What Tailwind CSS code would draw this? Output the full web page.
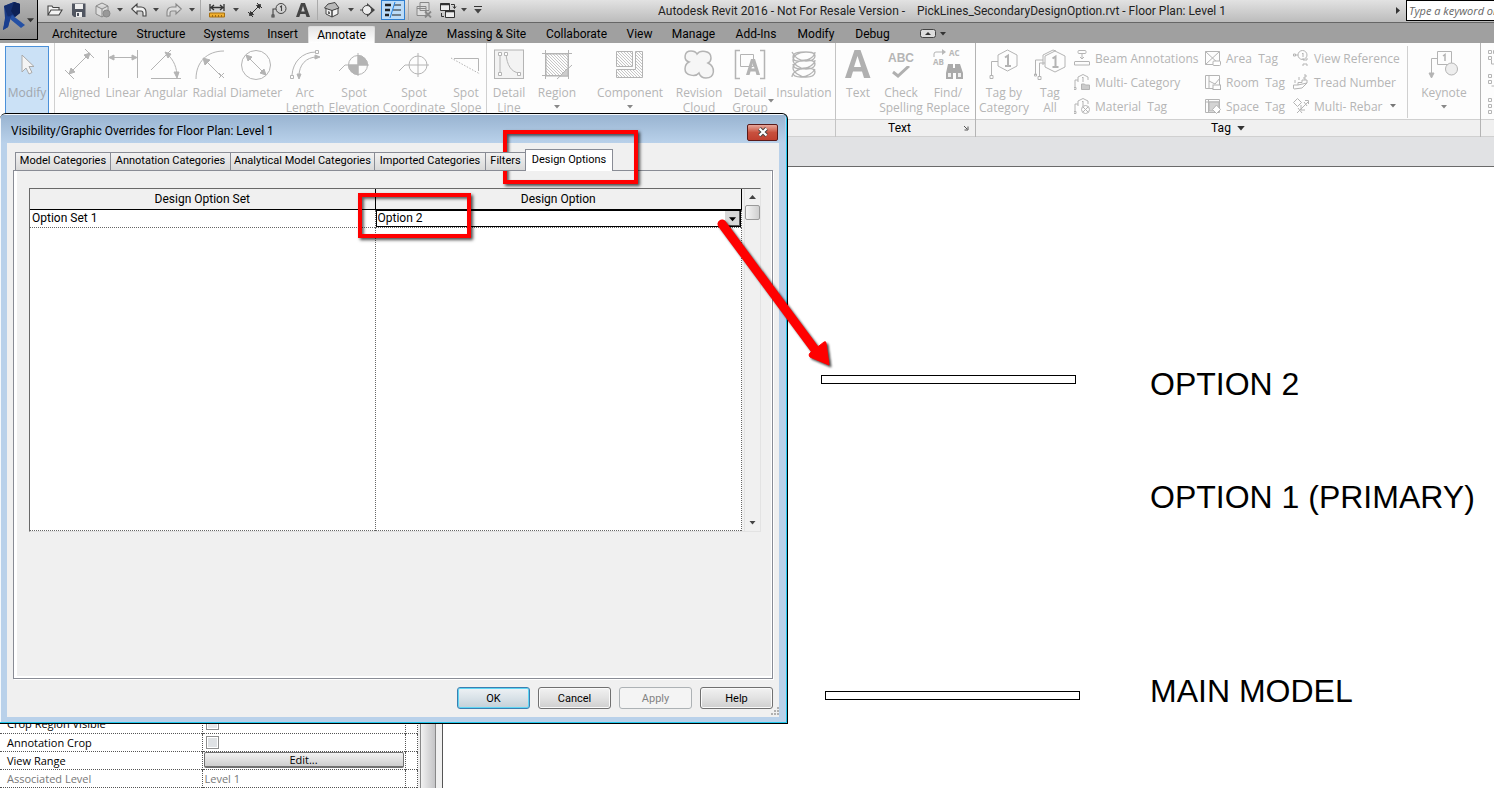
<!DOCTYPE html>
<html lang="en">
<head>
    <meta charset="UTF-8">
    <meta name="viewport" content="width=device-width, initial-scale=1.0">
    <title>Autodesk Revit 2016 - PickLines_SecondaryDesignOption.rvt</title>
    <script src="https://cdn.jsdelivr.net/npm/@tailwindcss/browser@4"></script>
</head>
<body class="h-screen overflow-hidden bg-white font-['Roboto','Open_Sans',sans-serif] text-xs text-black">

    <!-- Shared icon parts -->
    <svg class="absolute h-0 w-0">
        <symbol id="caret" viewBox="0 0 6 4"><path d="M0 0h6L3 3.6z" fill="currentColor"/></symbol>
        <pattern id="hatch" width="3" height="3" patternUnits="userSpaceOnUse"><path d="M0 0l3 3" stroke="#b8b8b8" stroke-width=".8"/></pattern>
    </svg>

    <div class="relative flex h-full flex-col">

        <!-- Title bar, quick access and ribbon tabs -->
        <header class="flex shrink-0 bg-[#a0a0a0]">
            <button aria-label="Application menu" class="flex h-10 w-[38px] shrink-0 items-center gap-0.5 border-r border-b border-black bg-linear-to-b from-[#b4b4b4] to-[#8c8c8c] pb-2 pl-[3px]">
                <svg class="h-7 w-[22px] shrink-0" viewBox="0 0 22 28">
                    <path d="M1 4l10-4 6 2v9l-5 4-5 1-2 9-5 3 2-12z" fill="#1a3b86"/>
                    <path d="M1 4l10-4 6 2-3 8-9 5z" fill="#142e6e"/>
                    <path d="M11 0l6 2v9l-5 4-4-6z" fill="#0d2156"/>
                    <path d="M9 13l13 10-4 3-11-9z" fill="#2450a4"/>
                    <path d="M3 14l5 1-3 10-5 3z" fill="#1a3f90"/>
                </svg>
                <svg class="mt-2.5 h-[5px] w-[7px] shrink-0 text-[#333]"><use href="#caret"/></svg>
            </button>

            <div class="min-w-0 flex-1">
                <div class="flex h-[23px] items-start overflow-hidden border-b border-[#666] bg-linear-to-b from-[#e2e2e2] to-[#bcbcbc]">
                    <div class="flex h-5 w-[454px] shrink-0 items-center pl-[5px] text-[#444]">
                        <button aria-label="Open" class="flex w-6 justify-center"><svg class="h-4 w-4" viewBox="0 0 16 16" fill="#f4f4f4" stroke="#444" stroke-width="1.1"><path d="M1 13V4h4l1 1.500h6V8M1 13l3-5h11l-3 5z"/></svg></button>
                        <button aria-label="Save" class="flex w-6 justify-center"><svg class="h-4 w-4" viewBox="0 0 16 16"><path d="M1 1.500h13.500V15H3l-2-2z" fill="#505560"/><path d="M4 2h8v5H4zM5 10h6v5H5z" fill="#eee"/><path d="M6 11h2v3H6z" fill="#505560"/></svg></button>
                        <button aria-label="Synchronize" class="flex w-6 justify-center"><svg class="h-4 w-4" viewBox="0 0 16 16" fill="#ddd" stroke="#888"><path d="M1 4l6-3 6 3v7l-6 4-6-3zM1 4l6 3 6-3M7 7v8"/><circle cx="11.500" cy="11.500" r="3.500" fill="#999"/></svg></button>
                        <span class="flex w-2.5 justify-center"><svg class="h-1 w-1.5"><use href="#caret"/></svg></span>
                        <button aria-label="Undo" class="flex w-[27px] justify-center"><svg class="h-4 w-4" viewBox="0 0 16 16" fill="#f0f0f0" stroke="#444" stroke-width="1.100"><path d="M.7 7l5.300-5v3h4c3 0 5 2 5 5v4h-3v-3c0-1.500-.8-2-2-2H6v3z"/></svg></button>
                        <span class="flex w-2 justify-center"><svg class="h-1 w-1.5"><use href="#caret"/></svg></span>
                        <button aria-label="Redo" class="flex w-7 justify-center"><svg class="h-4 w-4" viewBox="0 0 16 16" fill="#ddd" stroke="#888" stroke-width="1.100"><path d="M15.300 7L10 2v3H6c-3 0-5 2-5 5v4h3v-3c0-1.500.8-2 2-2h4v3z"/></svg></button>
                        <span class="flex w-2 justify-center"><svg class="h-1 w-1.5"><use href="#caret"/></svg></span>
                        <span class="mx-1 h-5 w-px bg-[#aaa]"></span>
                        <button aria-label="Measure" class="flex w-6 justify-center"><svg class="h-4 w-4" viewBox="0 0 16 16"><path d="M1 2v7M15 2v7M2 5.500h12M5 3L2 5.500 5 8M11 3l3 2.500L11 8" fill="none" stroke="#333" stroke-width="1.300"/><path d="M.5 11h15v4H.5z" fill="#f0b030" stroke="#a87010"/><path d="M3.500 13v2M6.500 13v2M9.500 13v2M12.500 13v2" stroke="#a06a10"/></svg></button>
                        <span class="flex w-2.5 justify-end"><svg class="h-1 w-1.5"><use href="#caret"/></svg></span>
                        <button aria-label="Aligned dimension" class="ml-1 flex w-6 justify-center"><svg class="h-4 w-4" viewBox="0 0 16 16" fill="none" stroke="#333"><path d="M3 13L13 3M1 10l5 5M10 1l5 5"/><path d="M2.500 13.500l1-4 3 3zM13.500 2.500l-1 4-3-3z" fill="#333"/></svg></button>
                        <button aria-label="Tag by category" class="flex w-6 justify-center"><svg class="h-4 w-4" viewBox="0 0 16 16" fill="none" stroke="#444"><circle cx="10" cy="6.500" r="5"/><path d="M5 7H2v6M1 13h2v2H1zM9 5l1.500-1v5" stroke-width="1.100"/></svg></button>
                        <button aria-label="Text" class="flex w-6 justify-center"><svg class="h-4 w-4" viewBox="0 0 16 16"><path d="M6 1h4l5 14h-3.500l-1-3H5.300l-1 3H1zM8 4L6.300 9.500h3.400z" fill="#444"/></svg></button>
                        <span class="mx-0.5 h-5 w-px bg-[#aaa]"></span>
                        <button aria-label="3D view" class="flex w-6 justify-center"><svg class="h-4 w-4" viewBox="0 0 16 16" fill="#f2f2f2" stroke="#444"><path d="M2 6v6l6 3V8zM8 8v7l6-3V6z"/><path d="M.5 6L4 2l7-1.500L15 6 8 8.500z" fill="#b8b8b8"/><path d="M4 9v3h2v-2z" fill="#666" stroke="none"/></svg></button>
                        <span class="flex w-2.5 justify-end"><svg class="h-1 w-1.5"><use href="#caret"/></svg></span>
                        <button aria-label="Section" class="flex w-[27px] justify-center"><svg class="h-4 w-4" viewBox="0 0 16 16"><path d="M7 1l8 7-8 7z" fill="#444"/><circle cx="7" cy="8" r="4.500" fill="#eee" stroke="#444"/><path d="M0 8h3" stroke="#444"/></svg></button>
                        <button aria-label="Thin lines" class="flex h-5 w-6 shrink-0 items-center justify-center border border-[#2f7fd0] bg-[#bcdcf8]"><svg class="h-4 w-4" viewBox="0 0 16 16"><path d="M0 3h6M0 8h5M0 13h4" stroke="#222" stroke-width="2.500"/><path d="M9 3h7M8 8h8M7 13h9" stroke="#222"/><path d="M10 0L5 16" stroke="#2080e0"/></svg></button>
                        <span class="mx-[3px] h-5 w-px bg-[#aaa]"></span>
                        <button aria-label="Close hidden windows" class="flex w-6 justify-center"><svg class="h-4 w-4" viewBox="0 0 16 16" fill="#ddd" stroke="#888"><path d="M4 .5h9v8H4zM1 4.500h9v9H1zM1 6.500h9"/><path d="M9 9.500l6 6M15 9.500l-6 6" stroke-width="1.800"/></svg></button>
                        <button aria-label="Switch windows" class="flex w-6 justify-center"><svg class="h-[18px] w-[18px]" viewBox="0 0 18 18" fill="#eee" stroke="#333"><path d="M1.500 2.500h9v7h-9zM6.500 9.500h9v7h-9z"/><path d="M1 3.500h10M6 10.500h10" stroke-width="1.500"/><path d="M12 3.500h3.500V7M2.500 12v3.500H5M14 5.500l1.500 2 1.500-2" fill="none"/></svg></button>
                        <span class="flex w-2 justify-center"><svg class="h-1 w-1.5"><use href="#caret"/></svg></span>
                        <span class="ml-1 flex w-3 shrink-0 flex-col items-center gap-0.5"><span class="h-px w-2 bg-[#333]"></span><svg class="h-[5px] w-2"><use href="#caret"/></svg></span>
                    </div>
                    <div class="flex h-[22px] min-w-0 flex-1 items-center pl-[166px] whitespace-pre text-[#222]">Autodesk Revit 2016 - Not For Resale Version -    PickLines_SecondaryDesignOption.rvt - Floor Plan: Level 1</div>
                    <div class="flex shrink-0 items-start gap-1.5">
                        <svg class="mt-[7px] h-[7px] w-1" viewBox="0 0 4 7"><path d="M0 0l4 3.500L0 7z" fill="#333"/></svg>
                        <input aria-label="Search" placeholder="Type a keyword or phrase" class="h-[21px] w-[88px] border border-r-0 border-black bg-white pl-0.5 font-['Open_Sans'] text-[11px] italic placeholder:text-[#666]">
                    </div>
                </div>
                <nav class="flex h-5 items-end pl-1">
                    <a href="#" class="w-[85px] text-center leading-[18px]">Architecture</a>
                    <a href="#" class="w-[68px] text-center leading-[18px]">Structure</a>
                    <a href="#" class="w-[63px] text-center leading-[18px]">Systems</a>
                    <a href="#" class="w-[49px] text-center leading-[18px]">Insert</a>
                    <a href="#" class="mx-px w-[67px] rounded-t-xs border-x border-t border-[#ddd] bg-linear-to-b from-[#e4e4e4] to-white text-center leading-4">Annotate</a>
                    <a href="#" class="w-[61px] text-center leading-[18px]">Analyze</a>
                    <a href="#" class="w-[99px] text-center leading-[18px]">Massing &amp; Site</a>
                    <a href="#" class="w-[81px] text-center leading-[18px]">Collaborate</a>
                    <a href="#" class="w-[45px] text-center leading-[18px]">View</a>
                    <a href="#" class="w-[63px] text-center leading-[18px]">Manage</a>
                    <a href="#" class="w-[62px] text-center leading-[18px]">Add-Ins</a>
                    <a href="#" class="w-[58px] text-center leading-[18px]">Modify</a>
                    <a href="#" class="w-[55px] text-center leading-[18px]">Debug</a>
                    <button aria-label="Minimize ribbon" class="ml-5 flex h-[19px] items-center gap-1">
                        <svg class="h-[9px] w-4" viewBox="0 0 16 9"><rect x=".5" y=".5" width="15" height="8" rx="2" fill="#ddd" stroke="#444"/><path d="M5 6h6L8 3z" fill="#333"/></svg>
                        <svg class="h-1 w-1.5 text-[#333]"><use href="#caret"/></svg>
                    </button>
                </nav>
            </div>
        </header>

        <!-- Ribbon panels -->
        <div class="flex h-[94px] shrink-0 overflow-hidden bg-[#fdfdfd] font-['Open_Sans',sans-serif] leading-[15px] whitespace-nowrap text-[#b5b5b5]">
            <section class="flex w-[55px] shrink-0 border-r border-[#d0d0d0] pt-[3px] pl-[5px]">
                <button class="flex w-11 flex-col items-center border border-[#4a90d9] bg-[#cbe1f6] pt-1">
                    <svg class="h-[34px] w-8" viewBox="0 0 32 34"><path d="M11 4v17l4-4 3 6 3-1.500-3-6h5z" fill="#f4f4f4" stroke="#aaa"/></svg>
                    <span class="text-[#a0a6ad]">Modify</span>
                </button>
            </section>

            <section class="flex w-[432px] shrink-0 items-start border-r border-[#d0d0d0] pt-[5px] pl-0.5">
                <button class="flex w-[45px] flex-col items-center gap-[5px]"><svg class="h-8 w-8" viewBox="0 0 32 32" fill="none" stroke="#b4b4b4"><path d="M6 25L25 6M1 22l9 9M21 1l9 9"/><path d="M5 26l2-6 4 4zM26 5l-2 6-4-4z" fill="#b4b4b4"/></svg><span>Aligned</span></button>
                <button class="flex w-[42px] flex-col items-center gap-[5px]"><svg class="h-8 w-8" viewBox="0 0 32 32" fill="none" stroke="#b4b4b4"><path d="M1.500 2v28M30.500 2v28M3 9.500h26"/><path d="M2 9.500l5-2.500v5zM30 9.500L25 7v5z" fill="#b4b4b4"/></svg><span>Linear</span></button>
                <button class="flex w-11 flex-col items-center gap-[5px]"><svg class="h-8 w-8" viewBox="0 0 32 32" fill="none" stroke="#b4b4b4"><path d="M1 30.500h30M1 22L21 2M17 6c7 6 10 14 10 23"/><path d="M15 4l6 2-3 4zM27 30l-3-6h5z" fill="#b4b4b4"/></svg><span>Angular</span></button>
                <button class="flex w-[43px] flex-col items-center gap-[5px]"><svg class="h-8 w-8" viewBox="0 0 32 32" fill="none" stroke="#b4b4b4"><path d="M2 31C2 14 13 3 30 3M10 11l17 17M25 30l5-5M25 25l5 5"/><path d="M9 10l7 2-5 5z" fill="#b4b4b4"/></svg><span>Radial</span></button>
                <button class="flex w-[50px] flex-col items-center gap-[5px]"><svg class="h-8 w-8" viewBox="0 0 32 32" fill="none" stroke="#b4b4b4"><circle cx="16" cy="17" r="14.500"/><path d="M6 7l20 20"/><path d="M6 7l6 2-4 4zM26 27l-6-2 4-4z" fill="#b4b4b4"/></svg><span>Diameter</span></button>
                <button class="flex w-12 flex-col items-center gap-[5px]"><svg class="h-8 w-8" viewBox="0 0 32 32" fill="none" stroke="#b4b4b4"><path d="M3 27C4 14 13 4 27 4M10 28c0-11 7-19 18-19"/><path d="M1.500 27.500h3v3h-3zM26.500 2.500h3v3h-3z"/><path d="M10 31l-2-5h4zM31 9l-5-2v4z" fill="#b4b4b4"/></svg><span class="text-center">Arc<br>Length</span></button>
                <button class="flex w-[50px] flex-col items-center gap-[5px]"><svg class="h-8 w-8" viewBox="0 0 32 32" fill="none" stroke="#b4b4b4"><circle cx="20" cy="17" r="9.500"/><path d="M20 5v23M1 23l6-6h24"/><path d="M20 7.500a9.500 9.500 0 0 1 9.500 9.500H20zM20 26.500a9.500 9.500 0 0 1-9.500-9.500H20z" fill="#b4b4b4"/></svg><span class="text-center">Spot<br>Elevation</span></button>
                <button class="flex w-[70px] flex-col items-center gap-[5px]"><svg class="h-8 w-8" viewBox="0 0 32 32" fill="none" stroke="#b4b4b4"><circle cx="20" cy="17" r="9"/><path d="M20 5v24M1 23l6-6h24"/></svg><span class="text-center">Spot<br>Coordinate</span></button>
                <button class="flex w-[34px] flex-col items-center gap-[5px]"><svg class="h-8 w-8" viewBox="0 0 32 32" fill="none" stroke="#b4b4b4"><path d="M4 10.500h24.500V23"/><path d="M1 10l29 16" stroke-dasharray="1.500 1.500"/></svg><span class="text-center">Spot<br>Slope</span></button>
            </section>

            <section class="flex w-[349px] shrink-0 flex-col border-r border-[#c4c4c4]">
                <div class="flex h-[76px] items-start pt-[5px] pl-px">
                    <button class="flex w-[42px] flex-col items-center gap-[5px]"><svg class="h-8 w-8" viewBox="0 0 32 32" fill="none" stroke="#b4b4b4"><rect x="1.500" y="2" width="29" height="28.500" fill="#f3f3f3"/><path d="M7 7v18M13 6c1 11 5 18 13 19"/><path d="M5.500 4.500h3v3h-3zM5.500 24.500h3v3h-3zM11.500 4.500h3v3h-3zM24.500 24.500h3v3h-3z" fill="#fff"/></svg><span class="text-center">Detail<br>Line</span></button>
                    <button class="flex w-[54px] flex-col items-center gap-[5px]"><svg class="h-8 w-8" viewBox="0 0 32 32" fill="none" stroke="#b4b4b4"><path d="M5 6h22v22H5z" fill="url(#hatch)"/><path d="M1 5.500h30M1 27.500h22M4.500 2v29M27.500 2v29M16 31l15-14"/><path d="M27 20v8h-8z" fill="#ccc"/></svg><span>Region</span><svg class="h-1 w-1.5 text-[#888]"><use href="#caret"/></svg></button>
                    <button class="flex w-[92px] flex-col items-center gap-[5px]"><svg class="h-8 w-8" viewBox="0 0 32 32" fill="url(#hatch)" stroke="#b4b4b4"><path d="M2.500 3.500h16v15h-16zM21.500 3.500h7v26h-26v-8h19z"/></svg><span>Component</span><svg class="h-1 w-1.5 text-[#888]"><use href="#caret"/></svg></button>
                    <button class="flex w-[46px] flex-col items-center gap-[5px]"><svg class="h-8 w-8" viewBox="0 0 32 32" fill="#f6f6f6" stroke="#b4b4b4" stroke-width="1.500"><path d="M6 14C0 12 1 3 8 3c3 0 5 1 6 3 3-4 14-4 14 4 0 3-1 4-3 5 8 4 7 15-2 15-4 0-6-2-7-5-3 4-14 3-14-4 0-4 2-6 4-7z"/></svg><span class="text-center">Revision<br>Cloud</span></button>
                    <button class="relative flex w-14 flex-col items-center gap-[5px]"><svg class="h-8 w-8" viewBox="0 0 32 32" fill="none" stroke="#b4b4b4"><path d="M6 2.500H1.500v28H6M26 2.500h4.500v28H26" stroke-width="1.500"/><path d="M6.500 6.500h13v12h-13z"/><path d="M17 11h4l5 16h-3.500l-1-3.500h-5l-1 3.500H12zM19 15l-1.500 5.500h3z" fill="#b4b4b4" fill-rule="evenodd" stroke="none"/></svg><span class="text-center">Detail<br>Group</span><svg class="absolute right-1 bottom-3 h-1 w-1.5 text-[#888]"><use href="#caret"/></svg></button>
                    <button class="flex w-[52px] flex-col items-center gap-[5px]"><svg class="h-8 w-8" viewBox="0 0 32 32" fill="none" stroke="#b4b4b4" stroke-width="1.300"><path d="M4 4c2 4 6 9 14 9 4 0 9-1 9-5s-6-4-9-4C10 4 5 8 5 12s7 9 13 9c4 0 9-1 9-5s-5-4-9-4C10 12 5 16 5 20s7 9 13 9c4 0 9-1 9-5s-5-4-9-4c-8 0-14 5-14 9M18 4c-6 0-13 0-13 5s5 4 8 4c8 0 14-5 14-9M5 16c0 5 5 5 8 5 7 0 14-5 14-9M5 25c0 4 5 4 8 4 6 0 12-4 14-8"/></svg><span>Insulation</span></button>
                </div>
                <div class="h-[18px] border-y border-[#d0d0d0] bg-[#f0f0f0]"></div>
            </section>

            <section class="flex w-[140px] shrink-0 flex-col border-r border-[#b4b4b4]">
                <div class="flex h-[76px] items-start pt-[5px]">
                    <button class="flex w-11 flex-col items-center gap-[5px]"><svg class="h-8 w-8" viewBox="0 0 32 32"><path d="M12.500 2h6l10 28h-6.500l-2-6.500h-9l-2 6.500H3zM15.500 8L12 19h7z" fill="#b0b0b0" fill-rule="evenodd"/></svg><span>Text</span></button>
                    <button class="flex w-[42px] flex-col items-center gap-[5px]"><span class="flex h-8 flex-col items-center pt-0.5 font-['Liberation_Sans',sans-serif] text-[12px] leading-4 font-bold">ABC<svg class="h-3 w-[18px]" viewBox="0 0 18 12"><path d="M1 6l5 4L17 0" fill="none" stroke="#b0b0b0" stroke-width="3"/></svg></span><span class="text-center">Check<br>Spelling</span></button>
                    <button class="flex w-[52px] flex-col items-center gap-[5px]"><svg class="h-8 w-8" viewBox="0 0 32 32" fill="#b8b8b8"><path d="M2 9V6q0-2 2-2h7" fill="none" stroke="#b4b4b4"/><path d="M10 1l4 3-4 3z"/><text x="17" y="8" font-size="8" font-weight="bold">AC</text><text x="1" y="17" font-size="8" font-weight="bold">AB</text><path d="M16 16h5v4h2v-4h5l3 9v6h-7v-6h-3v6h-7v-6z" fill="#aaa"/><path d="M16 25h3v4h-3zM26 25h3v4h-3z" fill="#eee"/></svg><span class="text-center">Find/<br>Replace</span></button>
                </div>
                <div class="flex h-[18px] items-center border-y border-[#d0d0d0] bg-[#f0f0f0] pr-1.5 font-['Roboto','Open_Sans',sans-serif] text-black">
                    <span class="flex-1 text-center">Text</span>
                    <svg class="h-1.5 w-1.5" viewBox="0 0 6 6"><path d="M1 1l3 3M5 1.500V5H1.500" fill="none" stroke="#555"/></svg>
                </div>
            </section>

            <section class="flex w-[505px] shrink-0 flex-col border-r border-[#b4b4b4]">
                <div class="flex h-[76px] items-start pl-1">
                    <div class="flex shrink-0 pt-[5px]">
                        <button class="flex w-12 flex-col items-center gap-[5px]"><svg class="h-8 w-8" viewBox="0 0 32 32" fill="none" stroke="#b4b4b4"><path d="M19.500 2l9.500 5v11l-9.500 5-9.500-5V7zM10 13.500H3.500V28"/><path d="M2 27.500h3v3H2z"/><path d="M17 9.500l3-2V18M17 18h6" stroke-width="2"/></svg><span class="text-center">Tag by<br>Category</span></button>
                        <button class="flex w-11 flex-col items-center gap-[5px]"><svg class="h-8 w-8" viewBox="0 0 32 32" fill="none" stroke="#b4b4b4"><path d="M21 3l10 5v11l-10 5-10-5V8zM9 17V7l10-5 3 1M11 15H5.500v13M9 12H1.500v15"/><path d="M4 28.500h3v3H4zM.5 26h2v2h-2z"/><path d="M18.500 10.500l3-2V19M18.500 19h6" stroke-width="2"/></svg><span class="text-center">Tag<br>All</span></button>
                    </div>
                    <div class="flex w-[131px] shrink-0 flex-col pt-[3px] pl-0.5">
                        <button class="flex h-6 items-center gap-[5px]"><svg class="h-4 w-4 shrink-0" viewBox="0 0 16 16" fill="none" stroke="#b4b4b4"><rect x="4" y=".5" width="8" height="3" rx="1"/><path d="M8 3.500V9M6 7l2 2 2-2M.5 11.500h15M.5 15h15M.5 12v3M15.500 12v3"/></svg><span>Beam Annotations</span></button>
                        <button class="flex h-6 items-center gap-[5px]"><svg class="h-4 w-4 shrink-0" viewBox="0 0 16 16" fill="none" stroke="#b4b4b4"><path d="M9 .5l5 2.500v3M4 8V3L9 .5M4 6H1v7M0 13.500h2v2H0zM8 4l1-1v5"/><path d="M7.500 10h3l1 1h4v4.500h-8z" fill="#ccc"/></svg><span>Multi- Category</span></button>
                        <button class="flex h-6 items-center gap-[5px]"><svg class="h-4 w-4 shrink-0" viewBox="0 0 16 16" fill="none" stroke="#b4b4b4"><path d="M9 .5l5 2.500v3M4 8V3L9 .5M4 6H1v7M0 13.500h2v2H0zM8 4l1-1v5"/><circle cx="11.500" cy="11.500" r="4"/><path d="M9 9l5 5M14 9l-5 5"/></svg><span class="whitespace-pre">Material  Tag</span></button>
                    </div>
                    <div class="flex w-[88px] shrink-0 flex-col pt-[3px] pl-0.5">
                        <button class="flex h-6 items-center gap-[5px]"><svg class="h-4 w-4 shrink-0" viewBox="0 0 16 16" fill="none" stroke="#b4b4b4"><path d="M.5 1.500h14v13H.5zM.5 1.500l14 13M14.500 1.500l-14 13"/><rect x="8" y="11" width="7.500" height="4.500" rx="1" fill="#fff"/></svg><span class="whitespace-pre">Area  Tag</span></button>
                        <button class="flex h-6 items-center gap-[5px]"><svg class="h-4 w-4 shrink-0" viewBox="0 0 16 16" fill="none" stroke="#b4b4b4"><path d="M.5 1.500h14v13H.5zM4 1v13M4 7l6 3 5-6"/><rect x="8" y="11" width="7.500" height="4.500" fill="#fff"/></svg><span class="whitespace-pre">Room  Tag</span></button>
                        <button class="flex h-6 items-center gap-[5px]"><svg class="h-4 w-4 shrink-0" viewBox="0 0 16 16" fill="none" stroke="#b4b4b4"><path d="M.5 1.500h14v13H.5zM3.500 1v13M1 4h14"/><path d="M4 4h10v9H4z" fill="#d4d4d4"/><path d="M11.500 7l4 4.500-4 4-4-4z" fill="#fff"/></svg><span class="whitespace-pre">Space  Tag</span></button>
                    </div>
                    <div class="flex w-[116px] shrink-0 flex-col pt-[3px] pl-0.5">
                        <button class="flex h-6 items-center gap-[5px]"><svg class="h-4 w-4 shrink-0" viewBox="0 0 16 16" fill="none" stroke="#b4b4b4"><circle cx="9.500" cy="5" r="4.500"/><path d="M5 5H2M.5 4h2v2h-2zM9 4l1-1v4M9 9h2v2M15 9h-2v2M9 15h2v-2M15 15h-2v-2"/></svg><span>View Reference</span></button>
                        <button class="flex h-6 items-center gap-[5px]"><svg class="h-4 w-4 shrink-0" viewBox="0 0 16 16" fill="none" stroke="#b4b4b4"><path d="M.5 14.500V11H5V8.500h4V6h5v3l-5 5-8 1zM2 6v3M6 3v3M11 1h2v2h-2v2h2M5 11l9-2"/></svg><span>Tread Number</span></button>
                        <button class="flex h-6 items-center gap-[5px]"><svg class="h-4 w-4 shrink-0" viewBox="0 0 16 16" fill="none" stroke="#b4b4b4"><path d="M4.500.5l4 4-4 4-4-4zM4 15L15 4M8 7v5h4M5 10l4 5M11 4l3 4M12 2.500h3.500V6"/></svg><span>Multi- Rebar</span><svg class="ml-0.5 h-1 w-1.5 text-[#777]"><use href="#caret"/></svg></button>
                    </div>
                    <div class="mt-[3px] flex h-[72px] min-w-0 flex-1 items-start justify-center border-l border-[#d0d0d0] pt-0.5">
                        <button class="flex flex-col items-center gap-[5px]"><svg class="h-8 w-8" viewBox="0 0 32 32" fill="none" stroke="#b4b4b4"><path d="M9.500 3.500h14v13h-14zM9.500 10.500H3.500V28"/><path d="M3.500 30L1 25h5z" fill="#b4b4b4"/><path d="M15 8l2-1.500V13" stroke-width="1.500"/><circle cx="23.500" cy="21" r="6" fill="#eee"/></svg><span>Keynote</span><svg class="h-1 w-1.5 text-[#888]"><use href="#caret"/></svg></button>
                    </div>
                </div>
                <div class="flex h-[18px] items-center justify-center gap-1.5 border-y border-[#d0d0d0] bg-[#f0f0f0] font-['Roboto','Open_Sans',sans-serif] text-black">Tag<svg class="h-[5px] w-2 text-[#333]"><use href="#caret"/></svg></div>
            </section>

            <section class="flex min-w-0 flex-1 flex-col">
                <div class="flex h-[76px] flex-col gap-2 pt-[7px] pl-[7px]">
                    <svg class="h-4 w-4 shrink-0" viewBox="0 0 16 16" fill="none" stroke="#b4b4b4"><path d="M.5.5h3v3h-3zM.5 6.500h3v3h-3zM5.500.5h3v3h-3zM3.500 10v4h5"/></svg>
                    <svg class="h-4 w-4 shrink-0" viewBox="0 0 16 16" fill="none" stroke="#b4b4b4"><path d="M.5.5h3v3h-3zM.5 6.500h3v3h-3zM6.500 1.500h3v3h-3zM3.500 12h5"/></svg>
                    <svg class="h-4 w-4 shrink-0" viewBox="0 0 16 16" fill="none" stroke="#b4b4b4"><path d="M.5.5h3v3h-3zM.5 6.500h3v3h-3zM.5 12.500h3v3h-3z"/></svg>
                </div>
                <div class="h-[18px] border-y border-[#d0d0d0] bg-[#f0f0f0]"></div>
            </section>
        </div>

        <!-- Options bar -->
        <div class="h-[30px] shrink-0 border-b border-[#6a6a6a] bg-[#e1e2e4]"></div>

        <!-- Drawing area with the properties palette at its lower left -->
        <main class="relative flex min-h-0 flex-1 items-end">
            <div class="flex h-[73px] w-[443px] shrink-0 border-r border-[#555] bg-[#f0f0f0] font-['Open_Sans',sans-serif] text-[11px] leading-[17px]">
                <table class="w-[417px] table-fixed border-collapse bg-white">
                    <colgroup><col class="w-[202px]"><col class="w-[203px]"><col class="w-3"></colgroup>
                    <tbody>
                        <tr class="h-[18px] border-b border-dotted border-[#555]">
                            <td class="pl-[7px]"><label for="crop">Crop Region Visible</label></td>
                            <td class="border-x border-dotted border-[#555] pl-[3px]"><input id="crop" type="checkbox" class="block h-[13px] w-[13px] appearance-none border border-[#8e8f8f] bg-[#e6e8ea] shadow-[inset_0_0_0_1px_#fff]"></td>
                            <td class="border-r border-dotted border-[#555]"></td>
                        </tr>
                        <tr class="h-[18px] border-b border-dotted border-[#555]">
                            <td class="pl-[7px]"><label for="anno">Annotation Crop</label></td>
                            <td class="border-x border-dotted border-[#555] pl-[3px]"><input id="anno" type="checkbox" class="block h-[13px] w-[13px] appearance-none border border-[#8e8f8f] bg-[#dfe2e5] shadow-[inset_0_0_0_1px_#fff]"></td>
                            <td class="border-r border-dotted border-[#555]"></td>
                        </tr>
                        <tr class="h-[18px] border-b border-dotted border-[#555]">
                            <td class="pl-[7px]">View Range</td>
                            <td class="border-x border-dotted border-[#555] px-px"><button class="block h-4 w-full rounded-xs border border-b-2 border-[#707070] bg-linear-to-b from-[#f2f2f2] to-[#cfcfcf] leading-3">Edit...</button></td>
                            <td class="border-r border-dotted border-[#555]"></td>
                        </tr>
                        <tr class="h-[18px] border-b border-dotted border-[#555] text-[#777]">
                            <td class="pl-[7px]">Associated Level</td>
                            <td class="border-x border-dotted border-[#555] pl-0.5">Level 1</td>
                            <td class="border-r border-dotted border-[#555]"></td>
                        </tr>
                    </tbody>
                </table>
                <div class="ml-0.5 w-4 border-x border-[#888] bg-linear-to-r from-[#f2f2f2] to-[#c4c4c6]"></div>
            </div>

            <!-- Model geometry and text notes on the canvas -->
            <div class="absolute top-[208px] left-[821px] h-[9px] w-[255px] border border-black"></div>
            <div class="absolute top-[524px] left-[825px] h-[9px] w-[255px] border border-black"></div>
            <p class="absolute top-[197px] left-[1150px] font-['Liberation_Sans',sans-serif] text-[32px] leading-10 whitespace-nowrap">OPTION 2</p>
            <p class="absolute top-[310px] left-[1150px] font-['Liberation_Sans',sans-serif] text-[32px] leading-10 whitespace-nowrap">OPTION 1 (PRIMARY)</p>
            <p class="absolute top-[504px] left-[1150px] font-['Liberation_Sans',sans-serif] text-[32px] leading-10 whitespace-nowrap">MAIN MODEL</p>
        </main>

        <!-- Visibility/Graphic Overrides dialog -->
        <div role="dialog" aria-labelledby="dialog-title" class="absolute top-[113px] left-0 flex h-[611px] w-[788px] flex-col overflow-hidden rounded-t-md border border-l-0 border-black bg-[#b9d1ea] pr-2 pb-1.5 pl-[7px] shadow-[inset_-1px_-1px_0_#22c8ee,inset_1px_1px_0_#f4f8fc]">
            <div class="-mx-[6px] mt-px flex h-7 shrink-0 items-center justify-between bg-linear-to-b from-[#99b4d1] to-[#b9d1ea] pr-[7px] pl-2.5">
                <h1 id="dialog-title" class="pt-1 text-[12px]">Visibility/Graphic Overrides for Floor Plan: Level 1</h1>
                <button aria-label="Close" class="mt-1.5 flex h-[17px] w-[31px] items-center justify-center rounded-xs border border-[#5a1a1a] bg-linear-to-b from-[#e6a79c] via-[#c8503e] via-50% to-[#c04030]">
                    <svg class="h-2.5 w-3" viewBox="0 0 12 10"><path d="M2.500 1.500l7 7M9.500 1.500l-7 7" stroke="#444" stroke-width="4"/><path d="M2.500 1.500l7 7M9.500 1.500l-7 7" stroke="#fff" stroke-width="2.200"/></svg>
                </button>
            </div>

            <div class="flex min-h-0 flex-1 flex-col bg-[#f0f0f0] px-1.5 pt-1.5 pb-2">
                <div role="tablist" class="relative z-10 -mb-px flex h-[22px] items-end pl-0.5 text-[11px]">
                    <button role="tab" class="h-[19px] w-24 border border-[#898c95] bg-linear-to-b from-[#f2f2f2] to-[#d8d8d8]">Model Categories</button>
                    <button role="tab" class="-ml-px h-[19px] w-[121px] border border-[#898c95] bg-linear-to-b from-[#f2f2f2] to-[#d8d8d8]">Annotation Categories</button>
                    <button role="tab" class="-ml-px h-[19px] w-[145px] border border-[#898c95] bg-linear-to-b from-[#f2f2f2] to-[#d8d8d8]">Analytical Model Categories</button>
                    <button role="tab" class="-ml-px h-[19px] w-[112px] border border-[#898c95] bg-linear-to-b from-[#f2f2f2] to-[#d8d8d8]">Imported Categories</button>
                    <button role="tab" class="-ml-px h-[19px] w-[41px] border border-[#898c95] bg-linear-to-b from-[#f2f2f2] to-[#d8d8d8]">Filters</button>
                    <button role="tab" aria-selected="true" class="-ml-px h-[22px] w-[88px] border border-b-0 border-[#898c95] bg-white">Design Options</button>
                </div>

                <div role="tabpanel" class="min-h-0 flex-1 border border-[#898c95] pt-[17px] pr-[11px] pl-[15px] shadow-[inset_3px_0_0_#fff,inset_-1px_-2px_0_#fff,1px_1px_0_#fff]">
                    <div class="flex h-[344px] border border-t-[#696969] border-r-[#e3e3e3] border-b-[#e3e3e3] border-l-[#696969]">
                        <div class="min-w-0 flex-1 bg-white">
                            <table class="h-full w-full table-fixed border-collapse">
                                <colgroup><col class="w-[345px]"><col></colgroup>
                                <thead>
                                    <tr class="h-5 border-b border-black bg-[#f0f0f0]">
                                        <th class="border-r border-black font-normal">Design Option Set</th>
                                        <th class="border-r border-black font-normal">Design Option</th>
                                    </tr>
                                </thead>
                                <tbody>
                                    <tr class="h-[18px] border-b border-dotted border-[#666]">
                                        <td class="border-r border-dotted border-[#666] pl-0.5">Option Set 1</td>
                                        <td class="border-r border-dotted border-[#666] p-0">
                                            <div class="relative h-[17px] border border-black">
                                                <select aria-label="Design Option" class="block h-[15px] w-full appearance-none bg-white pl-px leading-[15px]">
                                                    <option>Option 2</option>
                                                </select>
                                                <span class="pointer-events-none absolute top-0 right-0 flex h-[15px] w-[15px] items-center justify-center border-r border-b border-[#555] bg-[#d8d8d8] pt-1"><svg class="h-[5px] w-[7px]"><use href="#caret"/></svg></span>
                                            </div>
                                        </td>
                                    </tr>
                                    <tr class="border-b border-dotted border-[#666]">
                                        <td class="border-r border-dotted border-[#666]"></td>
                                        <td class="border-r border-dotted border-[#666]"></td>
                                    </tr>
                                </tbody>
                            </table>
                        </div>
                        <div class="ml-0.5 flex w-4 flex-col items-center border-l border-[#e3e3e3] bg-[#f0f0f0] py-1.5">
                            <svg class="h-1 w-[7px]" viewBox="0 0 7 4"><path d="M0 4h7L3.500 0z" fill="#444"/></svg>
                            <div class="mt-1.5 h-[15px] w-[15px] rounded-xs border border-[#999] bg-linear-to-r from-[#f5f5f5] to-[#cfcfcf]"></div>
                            <svg class="mt-auto h-1 w-[7px] text-[#444]"><use href="#caret"/></svg>
                        </div>
                    </div>
                </div>

                <div class="mt-2 flex h-[22px] shrink-0 justify-end gap-2 text-[11px]">
                    <button class="w-[73px] rounded-[3px] border border-[#3c7fb1] bg-linear-to-b from-[#eef2f5] via-[#d9e2e8] via-50% to-[#c3d0d8] pt-0.5 shadow-[inset_0_0_0_1px_#5fd6f4]">OK</button>
                    <button class="w-[73px] rounded-[3px] border border-[#707070] bg-linear-to-b from-[#f2f2f2] via-[#e2e2e2] via-50% to-[#cfcfcf] pt-0.5 shadow-[inset_0_0_0_1px_#fafafa]">Cancel</button>
                    <button disabled class="w-[73px] rounded-[3px] border border-[#adb2b5] bg-[#f4f4f4] pt-0.5 text-[#838383]">Apply</button>
                    <button class="w-[73px] rounded-[3px] border border-[#707070] bg-linear-to-b from-[#f2f2f2] via-[#e2e2e2] via-50% to-[#cfcfcf] pt-0.5 shadow-[inset_0_0_0_1px_#fafafa]">Help</button>
                </div>
            </div>
            <svg class="absolute right-2 bottom-2 h-2 w-2" viewBox="0 0 8 8" fill="#b0b0b0"><path d="M6 0h2v2H6zM3 3h2v2H3zM6 3h2v2H6zM0 6h2v2H0zM3 6h2v2H3zM6 6h2v2H6z"/></svg>
        </div>

        <!-- Red callouts -->
        <div class="pointer-events-none absolute top-[130px] left-[503px] h-[54px] w-[135px] border-4 border-[#f00] shadow-[2px_2px_3px_rgba(0,0,0,0.7),inset_2px_2px_3px_rgba(0,0,0,0.6)]"></div>
        <div class="pointer-events-none absolute top-[193px] left-[358px] h-[45px] w-[113px] border-4 border-[#f00] shadow-[2px_2px_3px_rgba(0,0,0,0.7),inset_2px_2px_3px_rgba(0,0,0,0.6)]"></div>
        <svg class="pointer-events-none absolute top-[215px] left-[711px] h-40 w-32 drop-shadow-[2px_2px_1px_rgba(0,0,0,0.7)]" viewBox="0 0 128 160">
            <path d="M11 9l94 127" stroke="#f00" stroke-width="9" stroke-linecap="round"/>
            <path d="M118 150l-19-8q-2-2 0-4l14-11q2-1 2 1z" fill="#f00" stroke="#f00" stroke-linejoin="round"/>
        </svg>
    </div>
</body>
</html>
